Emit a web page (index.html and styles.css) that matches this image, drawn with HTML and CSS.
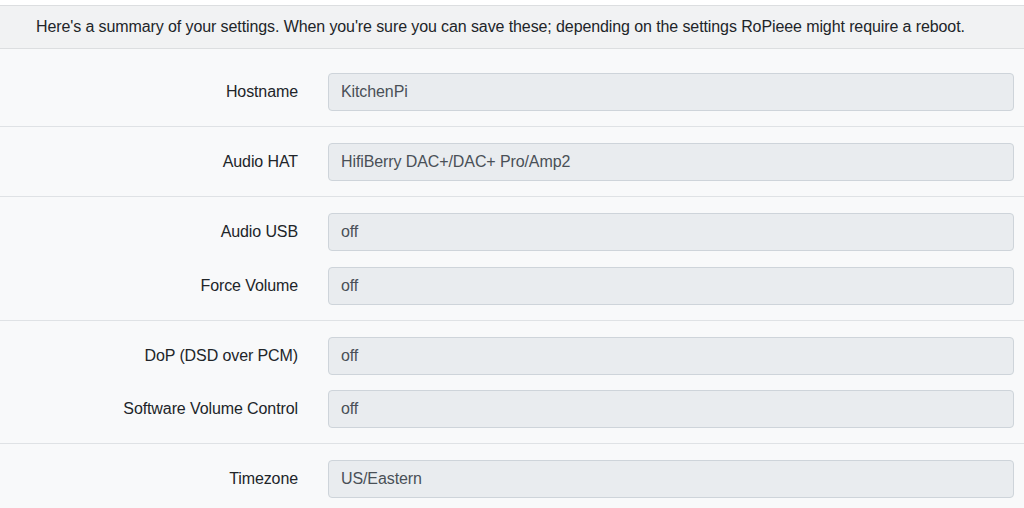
FILE: index.html
```html
<html>
	<head>
		<title>RoPieee - Summary</title>
		<link rel="stylesheet" href="styles.css">
	</head>
	<body>
		<div class="card">
			<div class="card-header">
				Here's a summary of your settings. When you're sure you can save these; depending on the settings RoPieee might require a reboot.
			</div>
			<div class="group first">
				<div class="row">
					<label class="label">Hostname</label>
					<div class="value">KitchenPi</div>
				</div>
			</div>
			<div class="group">
				<div class="row">
					<label class="label">Audio HAT</label>
					<div class="value">HifiBerry DAC+/DAC+ Pro/Amp2</div>
				</div>
			</div>
			<div class="group">
				<div class="row">
					<label class="label">Audio USB</label>
					<div class="value">off</div>
				</div>
				<div class="row">
					<label class="label">Force Volume</label>
					<div class="value">off</div>
				</div>
			</div>
			<div class="group">
				<div class="row">
					<label class="label">DoP (DSD over PCM)</label>
					<div class="value">off</div>
				</div>
				<div class="row">
					<label class="label">Software Volume Control</label>
					<div class="value">off</div>
				</div>
			</div>
			<div class="group">
				<div class="row">
					<label class="label">Timezone</label>
					<div class="value">US/Eastern</div>
				</div>
			</div>
		</div>
	</body>
</html>
```

FILE: styles.css
```css
body{
	margin: 0;
	background-color: #ffffff;
	color: #212529;
	font-family: "Liberation Sans", Arial, sans-serif;
	font-size: 16px;
	line-height: 24px;
	letter-spacing: -0.1px;
}
.card{
	margin-top: 5px;
	border-top: 1px solid #dcdee0;
	background-color: #f8f9fa;
}
.card-header{
	background-color: #f1f2f3;
	padding: 9px 20px 9px 36px;
	border-bottom: 1px solid #dcdee0;
}
.group{
	display: flex;
	flex-direction: column;
	gap: 15.5px;
	padding: 16px 10px 15px 0px;
	border-top: 1px solid #dfe2e5;
}
.group.first{
	border-top: none;
	padding-top: 24px;
}
.row{
	display: grid;
	grid-template-columns: 298px 1fr;
	column-gap: 30px;
	align-items: center;
}
.label{
	text-align: right;
}
.value{
	height: 38px;
	box-sizing: border-box;
	padding: 6px 12px;
	background-color: #e9ecef;
	border: 1px solid #ced4da;
	border-radius: 4px;
	color: #495057;
}
```
